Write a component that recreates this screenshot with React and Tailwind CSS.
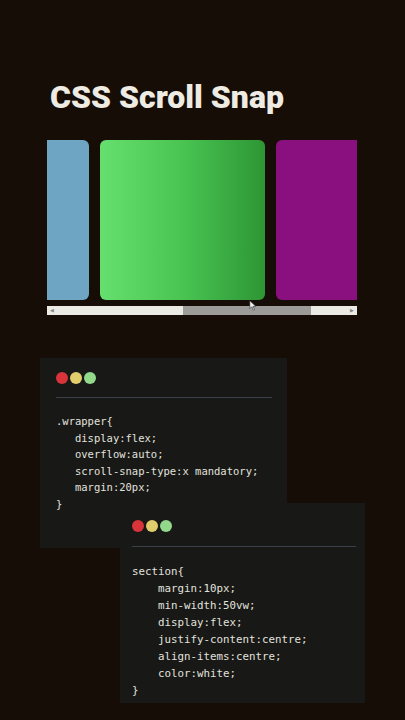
const wrapperLines = [
  ".wrapper{",
  "   display:flex;",
  "   overflow:auto;",
  "   scroll-snap-type:x mandatory;",
  "   margin:20px;",
  "}",
];

const sectionLines = [
  "section{",
  "    margin:10px;",
  "    min-width:50vw;",
  "    display:flex;",
  "    justify-content:centre;",
  "    align-items:centre;",
  "    color:white;",
  "}",
];

function Dots() {
  return (
    <div className="flex gap-[2px]">
      <span className="h-[12px] w-[12px] rounded-full bg-[#d8343a]" />
      <span className="h-[12px] w-[12px] rounded-full bg-[#e2cd6c]" />
      <span className="h-[12px] w-[12px] rounded-full bg-[#92d98b]" />
    </div>
  );
}

function Cursor() {
  return (
    <svg viewBox="0 0 10 14" className="absolute left-[249px] top-[300px] h-[11px] w-[8px]">
      <path d="M1 1 L1 11 L3.5 8.5 L5.5 13 L7 12.3 L5 8 L8.5 8 Z" fill="#f4f4f4" stroke="#333" strokeWidth="0.8" />
    </svg>
  );
}

export default function App() {
  return (
    <main
      className="relative h-[720px] w-[405px] overflow-hidden bg-[#150d06]"
      style={{ fontFamily: "Roboto, 'Liberation Sans', sans-serif" }}
    >
      <h1 className="pl-[50px] pt-[81px] text-[32px] font-black leading-[32px] text-[#eeebe2]">
        CSS Scroll Snap
      </h1>

      {/* carousel */}
      <div className="ml-[47px] mt-[27px] w-[310px]">
        <div className="flex h-[160px] gap-[11px]">
          <div className="w-[42px] rounded-r-[6px] bg-[#6ea5c2]" />
          <div className="w-[165px] rounded-[6px] bg-gradient-to-r from-[#65df6e] via-[#49c452] to-[#2d9634]" />
          <div className="flex-1 rounded-l-[6px] bg-[#8a1080]" />
        </div>
        <div className="mt-[6px] flex h-[9px] items-center bg-[#ebebe3]">
          <span className="ml-[3px] text-[5px] leading-none text-[#888]">◀</span>
          <div className="ml-[129px] h-full w-[128px] bg-[#9c9c99]" />
          <span className="ml-auto mr-[3px] text-[5px] leading-none text-[#888]">▶</span>
        </div>
      </div>
      <Cursor />

      {/* code boxes */}
      <div className="mt-[43px] flex flex-col" style={{ fontFamily: "'DejaVu Sans Mono', 'Liberation Mono', monospace" }}>
        <div className="ml-[40px] h-[190px] w-[247px] bg-[#181816] px-[16px] pt-[14px]">
          <Dots />
          <div className="mt-[13px] h-px w-[216px] bg-[#39404a]" />
          <div className="mt-[15px] text-[10.5px] leading-[16.5px] text-[#e2e2de]">
            {wrapperLines.map((l, i) => (
              <div key={i} className="whitespace-pre">{l}</div>
            ))}
          </div>
        </div>
        <div className="relative ml-[120px] mt-[-45px] h-[200px] w-[245px] bg-[#181816] px-[12px] pt-[17px]">
          <Dots />
          <div className="mt-[14px] h-px w-[224px] bg-[#39404a]" />
          <div className="mt-[16px] text-[10.8px] leading-[17px] text-[#e2e2de]">
            {sectionLines.map((l, i) => (
              <div key={i} className="whitespace-pre">{l}</div>
            ))}
          </div>
        </div>
      </div>
    </main>
  );
}
